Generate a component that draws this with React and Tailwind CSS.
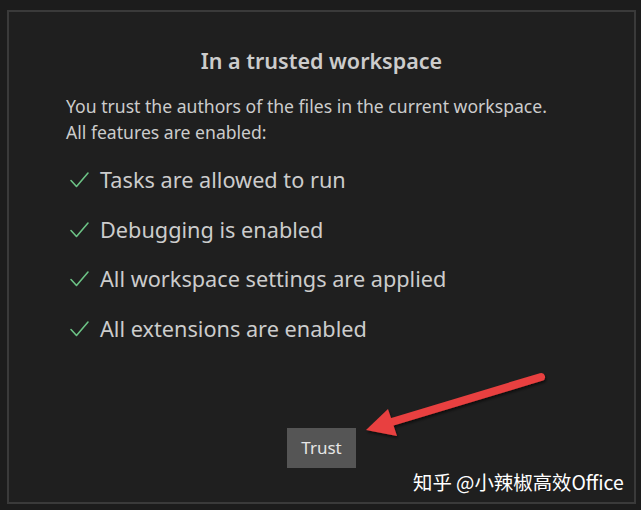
const items = [
  'Tasks are allowed to run',
  'Debugging is enabled',
  'All workspace settings are applied',
  'All extensions are enabled',
]

function Check() {
  return (
    <svg width="22" height="22" viewBox="0 0 22 22" fill="none" className="shrink-0">
      <path d="M3 11.5l5.5 6L20 4" stroke="#6cc285" strokeWidth="1.6" strokeLinecap="round" strokeLinejoin="round" />
    </svg>
  )
}

export default function App() {
  return (
    <div className="w-[641px] h-[510px] bg-[#1c1c1c] pt-[10px] pl-[7px] relative overflow-hidden" style={{ fontFamily: '"Noto Sans", "Noto Sans CJK SC", sans-serif' }}>
      <div className="w-[629px] h-[494px] border-2 border-[#3a3a3a] bg-[#1f1f1f] flex flex-col items-center pt-[34px]">
        <h1 className="text-[21.5px] font-semibold text-[#cccccc] leading-[30px]">In a trusted workspace</h1>
        <div className="self-start pl-[57px] mt-[17px] text-[17.6px] leading-[26px] text-[#cccccc]">
          <p>You trust the authors of the files in the current workspace.</p>
          <p>All features are enabled:</p>
        </div>
        <ul className="self-start pl-[59px] mt-[20px] flex flex-col gap-[19.5px]">
          {items.map((t) => (
            <li key={t} className="flex items-center gap-[10px] text-[21.7px] leading-[30px] text-[#cccccc]">
              <Check />
              <span>{t}</span>
            </li>
          ))}
        </ul>
        <button className="mt-[84px] w-[69px] h-[40px] bg-[#555555] text-[#e6e6e6] text-[17px]">Trust</button>
      </div>

      <svg className="absolute left-0 top-0" width="641" height="510" viewBox="0 0 641 510">
        <defs>
          <filter id="sh" x="-20%" y="-20%" width="140%" height="140%">
            <feDropShadow dx="1" dy="2" stdDeviation="1.5" floodColor="#000" floodOpacity="0.6" />
          </filter>
        </defs>
        <g filter="url(#sh)" fill="#e8403f">
          <line x1="541" y1="377" x2="385" y2="424" stroke="#e8403f" strokeWidth="8" strokeLinecap="round" />
          <path d="M366 430 L388 409 L397 436 Z" />
        </g>
      </svg>

      <div className="absolute left-[413px] top-[468px] text-[19.4px] leading-[28px] text-white" style={{ fontFamily: '"Noto Sans CJK SC", sans-serif' }}>
        知乎 @小辣椒高效Office
      </div>
    </div>
  )
}
